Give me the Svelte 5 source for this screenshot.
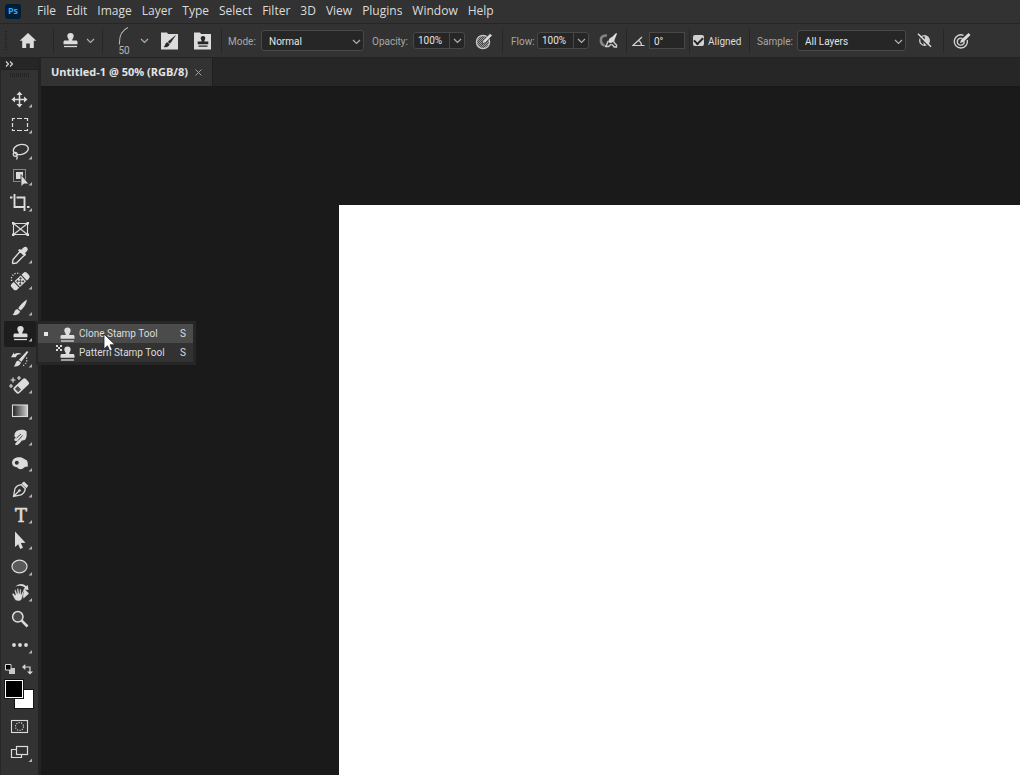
<script>
  const menus = ['File', 'Edit', 'Image', 'Layer', 'Type', 'Select', 'Filter', '3D', 'View', 'Plugins', 'Window', 'Help'];
  const tools = [
    ['move', 'Move Tool'], ['marquee', 'Rectangular Marquee Tool'], ['lasso', 'Lasso Tool'],
    ['object', 'Object Selection Tool'], ['crop', 'Crop Tool'], ['frame', 'Frame Tool'],
    ['dropper', 'Eyedropper Tool'], ['heal', 'Spot Healing Brush Tool'], ['brush', 'Brush Tool'],
    ['stamp', 'Clone Stamp Tool'], ['history', 'History Brush Tool'], ['eraser', 'Magic Eraser Tool'],
    ['gradient', 'Gradient Tool'], ['smudge', 'Smudge Tool'], ['sponge', 'Sponge Tool'],
    ['pen', 'Pen Tool'], ['type', 'Type Tool'], ['arrow', 'Path Selection Tool'],
    ['ellipse', 'Ellipse Tool'], ['rotate', 'Rotate View Tool'], ['zoom', 'Zoom Tool'], ['more', 'Edit Toolbar']
  ];
  const single = ['frame', 'zoom'];
  const flyout = [
    { name: 'Clone Stamp Tool', key: 'S' },
    { name: 'Pattern Stamp Tool', key: 'S' }
  ];
  let active = $state('stamp');
  let variant = $state(0);
  let aligned = $state(true);
</script>

{#snippet stamp()}
  <path d="M12.500 5c2 0 3.200 1.300 3.200 3 0 1.800-1.500 2.400-1.500 4.500h3.800c1 0 1.500.6 1.500 1.500v2.200h-14V14c0-.9.500-1.500 1.500-1.500h3.800c0-2.100-1.500-2.700-1.500-4.500 0-1.700 1.200-3 3.200-3z" fill="currentColor" />
  <path d="M6 18.500h13" stroke="currentColor" stroke-width="1.300" />
{/snippet}

{#snippet chevron()}
  <svg class="chev" viewBox="0 0 9 6" aria-hidden="true"><path d="M1 1l3.500 3.500L8 1" fill="none" stroke="currentColor" stroke-width="1.200" /></svg>
{/snippet}

{#snippet pressure(id)}
  <svg class="opt-icon" viewBox="0 0 18 18" aria-hidden="true">
    <defs><pattern {id} width="2" height="2" patternUnits="userSpaceOnUse"><rect width="2" height="2" fill="#4a4a4a" /><rect width="1" height="1" fill="#999" /><rect x="1" y="1" width="1" height="1" fill="#999" /></pattern></defs>
    <circle cx="8" cy="10" r="6.600" fill="url(#{id})" stroke="#c8c8c8" stroke-width="1.300" />
    <path d="M7 12l1-3.500L15 1.500l2.300 2-6.800 7z" fill="#dcdcdc" stroke="#323232" stroke-width=".7" />
  </svg>
{/snippet}

<div class="app">
  <header class="menubar">
    <span class="logo">Ps</span>
    <nav aria-label="Main menu">
      {#each menus as m}<button>{m}</button>{/each}
    </nav>
  </header>

  <section class="options" aria-label="Tool options">
    <div class="group g-home">
      <span class="grip-v"></span>
      <button class="ib" aria-label="Home">
        <svg width="18" height="17" viewBox="0 0 18 17"><path d="M9 1L.7 8.800h2.500V16h4v-4.600h3.600V16h4V8.800h2.500z" fill="currentColor" /></svg>
      </button>
    </div>
    <div class="group g-preset">
      <button class="ib" aria-label="Tool preset"><svg width="26" height="26" viewBox="0 0 26 26">{@render stamp()}</svg>{@render chevron()}</button>
    </div>
    <div class="group g-brush">
      <button class="ib preview" aria-label="Brush preset">
        <span class="tip"><svg width="12" height="19" viewBox="0 0 12 19"><path d="M1.500 17.500C1 9 4.500 3 10 .5" fill="none" stroke="#b4b4b4" stroke-width="1.100" /></svg><span>50</span></span>
        {@render chevron()}
      </button>
      <button class="ib" aria-label="Brush settings">
        <svg width="18" height="18" viewBox="0 0 18 18"><path d="M0 .5h6l1 1.500h10v15.500H0z" fill="currentColor" /><path d="M14.500 3.500L9 11.500l-2-1.700zM6.300 10.500l2 1.700c-.6 2.600-2.600 2.900-5.300 2.800 1.600-.9.900-3.900 3.300-4.500z" fill="#262626" stroke="#262626" stroke-width=".4" /></svg>
      </button>
      <button class="ib" aria-label="Clone source">
        <svg width="18" height="18" viewBox="0 0 18 18"><path d="M0 .5h6l1 1.500h10v15.500H0z" fill="currentColor" /><path d="M9 4c1.600 0 2.300 1 2.300 2.200 0 1.300-1 1.800-1 3.300h4v2.700H3.700V9.500h4c0-1.500-1-2-1-3.300C6.700 5 7.400 4 9 4zM4.500 13.500h9v1.200h-9z" fill="#262626" /></svg>
      </button>
    </div>
    <div class="group g-mode">
      <label for="mode">Mode:</label>
      <span class="sel"><select id="mode"><option>Normal</option><option>Multiply</option><option>Screen</option></select>{@render chevron()}</span>
      <label for="opacity">Opacity:</label>
      <span class="combo"><input id="opacity" value="100%" /><button aria-label="Opacity slider">{@render chevron()}</button></span>
      <button class="ib press" aria-label="Pressure for opacity">{@render pressure('check')}</button>
    </div>
    <div class="group g-flow">
      <label for="flow">Flow:</label>
      <span class="combo"><input id="flow" value="100%" /><button aria-label="Flow slider">{@render chevron()}</button></span>
      <button class="ib press" aria-label="Airbrush">
        <svg width="19" height="18" viewBox="0 0 19 18">
          <path d="M8 3.500C3.500 3 1.500 5.500 1.900 9c.3 2.500 1.800 4 3.600 4.500" fill="none" stroke="#858585" stroke-width="2.600" />
          <path d="M9.500 10.500c-.3-3 1.500-5 3.500-5.500L16.500 1.500l1.500-.5-.5 2-2.500 6c-2 2-3.500 2.500-5.500 1.500z" fill="#dcdcdc" />
          <path d="M9.500 9c-2 1.500-.5 4-3.500 5.500h3.500l3-2.500M14.500 7.500l.5 3 2.500 2.500v2h-2.200L13 12.500" fill="none" stroke="#d0d0d0" stroke-width="1.400" />
        </svg>
      </button>
    </div>
    <div class="group g-angle">
      <label for="angle" aria-label="Angle"><svg width="14" height="12" viewBox="0 0 14 12"><path d="M12.500 9.500H1L10 1M6.500 4.500c2 1 3 2.500 3 5" fill="none" stroke="#d0d0d0" stroke-width="1.200" /></svg></label>
      <input id="angle" class="field" value="0°" />
    </div>
    <div class="group g-align">
      <input id="aligned" type="checkbox" bind:checked={aligned} /><label for="aligned">Aligned</label>
    </div>
    <div class="group g-sample">
      <label for="sample">Sample:</label>
      <span class="sel"><select id="sample"><option>All Layers</option><option>Current Layer</option><option>Current &amp; Below</option></select>{@render chevron()}</span>
      <button class="ib" aria-label="Ignore adjustment layers">
        <svg width="15" height="15" viewBox="0 0 15 15"><circle cx="7.500" cy="7.500" r="4.800" fill="#323232" stroke="#d0d0d0" stroke-width="1.300" /><path d="M7.500 2.700a4.800 4.800 0 0 1 0 9.600c-2.800-2.500 1.500-5.500 0-9.600z" fill="#d0d0d0" /><path d="M0 1.700l13 13" stroke="#323232" stroke-width="1.500" /><path d="M1 .8l13 13" stroke="#dcdcdc" stroke-width="1.500" /></svg>
      </button>
    </div>
    <div class="group g-last">
      <button class="ib" aria-label="Pressure for size">
        <svg width="18" height="18" viewBox="0 0 18 18"><path d="M10.500 3.400A6.600 6.600 0 1 0 14.300 8M9.500 6.600A3.500 3.500 0 1 0 11.300 9.500" fill="none" stroke="#d0d0d0" stroke-width="1.400" /><path d="M7 11l1-3L15.500 1l2 2-7 7z" fill="#dcdcdc" /></svg>
      </button>
    </div>
  </section>

  <div class="body">
    <aside>
      <button class="collapse" aria-label="Expand panel"><svg width="9" height="6" viewBox="0 0 9 6"><path d="M1 .5L3.500 3 1 5.500M5 .5L7.500 3 5 5.500" fill="none" stroke="currentColor" stroke-width="1.100" /></svg></button>
      <div class="grip-row"><span class="grip-h"></span></div>
      <ul class="tools">
        {#each tools as [id, name]}
          <li>
            <button class="tool" class:active={active === id} aria-label={name} onclick={() => (active = id)}>
              <svg viewBox="0 0 26 26" aria-hidden="true">
                {#if id === 'move'}
                  <path d="M12.500 6.500v12M6.500 12.500h12" stroke="currentColor" stroke-width="1.500" />
                  <path d="M12.500 4.500l3 3.500h-6zM12.500 20.500l3-3.500h-6zM4.500 12.500L8 9.500v6zM20.500 12.500L17 9.500v6z" fill="currentColor" />
                {:else if id === 'marquee'}
                  <path d="M5.500 8V5.500H8M10 5.500h5M17 5.500h3.500V8M20.500 10v4M20.500 16v1.500h-3.500M15 17.500h-5M8 17.500H5.500V16M5.500 14v-4" fill="none" stroke="currentColor" stroke-width="1.200" />
                {:else if id === 'lasso'}
                  <ellipse cx="13.800" cy="10.500" rx="7.600" ry="5" transform="rotate(-12 13.800 10.500)" fill="none" stroke="currentColor" stroke-width="1.400" />
                  <circle cx="8.200" cy="15.300" r="2" fill="none" stroke="currentColor" stroke-width="1.200" /><path d="M9 16.500c1.500 1 1.500 2.500.5 4" fill="none" stroke="currentColor" stroke-width="1.300" />
                {:else if id === 'object'}
                  <rect x="6.500" y="4.500" width="12" height="12" fill="none" stroke="currentColor" stroke-dasharray="1 1" />
                  <path d="M9 7h7v7H9z" fill="currentColor" /><path d="M14 9.500v12l3-2.600h4.800z" fill="currentColor" stroke="#323232" stroke-width=".8" />
                {:else if id === 'crop'}
                  <path d="M3 6.500h2.500M7.500 3v13H18M9.500 6.500h8V20M20 16h2.500" fill="none" stroke="currentColor" stroke-width="1.900" />
                {:else if id === 'frame'}
                  <path d="M6.500 6.500h14v11h-14zM6.500 6.500l14 11M20.500 6.500l-14 11" fill="none" stroke="currentColor" stroke-width="1.100" />
                  <path d="M5 5h2.500v2.500H5zM19.500 5H22v2.500h-2.500zM5 16.500h2.500V19H5zM19.500 16.500H22V19h-2.500z" fill="currentColor" />
                {:else if id === 'dropper'}
                  <path d="M13.500 8l4 4-8 8-3.500.5-.5-.5.500-3.500z" fill="none" stroke="currentColor" stroke-width="1.400" />
                  <path d="M11 7.500l1.500-1.500 1.700.7 2.100-2c2.500-2.300 5.800.6 3.800 3.200l-2 2.100 1 1.700-1.500 1.600z" fill="currentColor" />
                {:else if id === 'heal'}
                  <path d="M4.500 12V8.500l2-3.300 3.500-1.200 3 1" fill="none" stroke="currentColor" stroke-width="1.300" stroke-dasharray="1.200 1.600" />
                  <g transform="translate(.3 -.8) rotate(-43 13 13)"><rect x="2.500" y="9" width="21" height="8" rx="2.600" fill="currentColor" /><path d="M8.300 8.500v9.500M17.700 8.500v9.500" stroke="#323232" stroke-width="1.100" /><path d="M10 10.200h2v2h-2zM14 10.200h2v2h-2zM10 14h2v2h-2zM14 14h2v2h-2zM12 12.100h2v2h-2z" fill="#4a4a4a" /></g>
                {:else if id === 'brush'}
                  <path d="M20 4.500c-4 2.500-7 6-8.800 8.800l2.600 2.300C17 12.500 19.500 8.500 20 4.500zM10.500 14l2.600 2.400c-1 3.200-4.300 4.100-7.800 3.600 2.500-1.300 1.500-5.400 5.200-6z" fill="currentColor" />
                {:else if id === 'stamp'}
                  <g transform="translate(1 0)">{@render stamp()}</g>
                {:else if id === 'history'}
                  <path d="M20 4l1.300 1L14.500 14.800l-2.700-2zM11.200 13.400l2.800 2.200c-1 3.400-4 4.400-7.500 3.900 2.200-1 1.500-5.500 4.700-6.100z" fill="currentColor" />
                  <path d="M4 10.300l3-5v2c3-1.800 5.500-1.600 7.500 0-3.200-.4-5 .4-5.500 3z" fill="currentColor" /><path d="M19.500 10.500c1 4-.5 7.500-4.500 8.500" fill="none" stroke="currentColor" stroke-width="1.200" stroke-dasharray="1.200 1.600" />
                {:else if id === 'eraser'}
                  <g transform="rotate(-43 14.500 13)"><rect x="6" y="8.800" width="16.500" height="8" rx="2.200" fill="currentColor" /><path d="M7.800 10.500h4v4.700h-4z" fill="#4a4a4a" /></g>
                  <path d="M6 4.500v5M3.500 7h5M12 3v4M10 5h4M4 11v4M2 13h4" stroke="currentColor" stroke-width="1.200" />
                {:else if id === 'gradient'}
                  <defs><linearGradient id="ramp"><stop stop-color="#222" /><stop offset="1" stop-color="#cfcfcf" /></linearGradient></defs>
                  <rect x="5.500" y="6" width="15" height="11.500" fill="url(#ramp)" stroke="currentColor" stroke-width="1.100" />
                {:else if id === 'smudge'}
                  <path d="M7.500 9.500C8 6.500 10.500 5 14 4.800c2.800-.1 5 .4 5.500 1.700.4 2 .4 6-1 7.800-1 1.200-2.500 1.200-3.700 1.200-1 1.800-2.600 3.600-4.800 4.600-1.800.6-2.400-.8-1.200-2.100l2-2.600c-2 1.200-3.600.6-3.500-.9.100-.8 1.200-1.200 1.700-2-1.500 0-1.700-1.500-1.500-3z" fill="currentColor" />
                  <path d="M9.500 13l4.500-4M11 15.500l4.500-5" stroke="#323232" stroke-width=".9" />
                {:else if id === 'sponge'}
                  <path d="M5 11.500C5.500 8 8.500 6.300 12 6.300c4 0 5.500 2 8 3.200 1 2 1 5 .5 6.500-2-.5-3 .2-4.500 1.500-2.500 1.500-4.500.5-6-1.200C7 16 5 14.500 5 11.500z" fill="currentColor" /><circle cx="9.800" cy="11.800" r="2" fill="#323232" />
                {:else if id === 'pen'}
                  <path d="M6.500 19.500l1.500-8q2-3.300 6.300-3.800l4 4q-.5 4.300-4.300 6.300zM6.500 19.500l5.500-5.500" fill="none" stroke="currentColor" stroke-width="1.300" /><circle cx="12.500" cy="13.500" r="1.300" fill="currentColor" /><path d="M14.500 6.500L17 4.500l4.300 4.300-2 2.500z" fill="currentColor" />
                {:else if id === 'type'}
                  <text x="14" y="18.500" text-anchor="middle" class="glyph">T</text>
                {:else if id === 'arrow'}
                  <path d="M8 2.500v15.500l3.200-2.800 2 4.700 2.800-1.200-2.200-4.700 4.700-.3z" fill="currentColor" />
                {:else if id === 'ellipse'}
                  <ellipse cx="12.500" cy="11.500" rx="7.500" ry="6.400" fill="#5a5a5a" stroke="currentColor" stroke-width="1.200" />
                {:else if id === 'rotate'}
                  <path d="M8.500 5.500c3-3.500 8-3.300 10.500-.2l1.700-1.300.8 5-5-.7 1.500-1.500C15.500 4.700 12 4.300 8.500 5.500zM17 7.500l5 5-5.500 5-1-5.500z" fill="currentColor" />
                  <path d="M6 12l2.500 2.300L7.500 9l1.300-.3 1.500 4L10 7.500h1.400l.9 5 .6-4.500 1.300.2-.2 5.300 1.500-3 1.200.5-1.500 6c-.6 2-1.700 3-3.700 3-2.500 0-3.500-1-4.500-3L5 13z" fill="currentColor" stroke="#323232" stroke-width=".4" />
                {:else if id === 'zoom'}
                  <circle cx="10.800" cy="9.800" r="5.200" fill="#484848" stroke="currentColor" stroke-width="1.500" /><path d="M14.700 13.700l5.800 5.800" stroke="currentColor" stroke-width="2.600" />
                {:else}
                  <circle cx="7" cy="12" r="1.900" fill="currentColor" /><circle cx="13" cy="12" r="1.900" fill="currentColor" /><circle cx="19" cy="12" r="1.900" fill="currentColor" />
                {/if}
                {#if !single.includes(id)}<path d="M25 17v3.500h-3.500z" fill="#b4b4b4" />{/if}
              </svg>
            </button>
            {#if id === 'stamp'}
              <div class="flyout" role="menu">
                {#each flyout as item, i}
                  <button role="menuitem" class:current={variant === i} onclick={() => (variant = i)}>
                    <span class="dot"></span>
                    <svg width="28" height="19" viewBox="0 2 28 19" aria-hidden="true">
                      <g transform="translate(4 .5)">{@render stamp()}</g>
                      {#if i === 1}<path d="M5 4h2v2H5zM9 4h2v2H9zM7 6h2v2H7zM5 8h2v2H5zM9 8h2v2H9z" fill="currentColor" />{/if}
                    </svg>
                    <span class="name">{item.name}</span><kbd>{item.key}</kbd>
                  </button>
                {/each}
                <svg class="pointer" width="13" height="19" viewBox="0 0 13 19" aria-hidden="true"><path d="M1 1v15l3.500-3.200L6.800 18l2.500-1.100L7 11.800h5z" fill="#fff" stroke="#222" stroke-width=".8" /></svg>
              </div>
            {/if}
          </li>
        {/each}
      </ul>
      <div class="mini">
        <button aria-label="Default colors"><svg width="11" height="11" viewBox="0 0 11 11"><path d="M4 4h6v6H4z" fill="#c8c8c8" /><path d="M.5.5h5.500v5.500H.5z" fill="#000" stroke="#d8d8d8" /></svg></button>
        <button aria-label="Swap colors"><svg width="11" height="11" viewBox="0 0 11 11"><path d="M2 3h6v6" fill="none" stroke="#d8d8d8" stroke-width="1.200" /><path d="M0 3L3.300 0v6zM8 10.500L5 7.500h6z" fill="#d8d8d8" /></svg></button>
      </div>
      <div class="swatches">
        <button class="sw back" aria-label="Background color"></button>
        <button class="sw front" aria-label="Foreground color"></button>
      </div>
      <div class="modes">
        <button class="tool" aria-label="Quick mask"><svg viewBox="0 0 26 26"><rect x="4.500" y="6.500" width="16" height="12" fill="none" stroke="currentColor" stroke-width="1.100" /><circle cx="12.500" cy="12.500" r="4" fill="none" stroke="currentColor" stroke-width="1.200" stroke-dasharray="1.100 1.400" /></svg></button>
        <button class="tool" aria-label="Screen mode"><svg viewBox="0 0 26 26"><path d="M9 9.500H4.500v8h10V15" fill="none" stroke="currentColor" stroke-width="1.200" /><rect x="9.500" y="6.500" width="11" height="8" fill="none" stroke="currentColor" stroke-width="1.200" /><path d="M25 18.500V22h-3.500z" fill="#b4b4b4" /></svg></button>
      </div>
    </aside>

    <main>
      <div class="tabs">
        <div class="tab">
          <span>Untitled-1 @ 50% (RGB/8)</span>
          <button aria-label="Close document"><svg width="7" height="7" viewBox="0 0 7 7"><path d="M.5.5l6 6M6.500.5l-6 6" stroke="#a0a0a0" /></svg></button>
        </div>
      </div>
      <div class="workspace"><div class="paper"></div></div>
    </main>
  </div>
</div>

<style>
  :global(body) { margin: 0; background: #1a1a1a; }
  .app, .app * { box-sizing: border-box; }
  .app {
    display: flex; flex-direction: column; min-height: 100vh; overflow: hidden;
    font-family: Roboto, sans-serif; font-size: 10px; line-height: 14px; color: #dcdcdc; background: #323232;
  }
  button { border: 0; padding: 0; margin: 0; background: none; color: inherit; font: inherit; }
  svg { display: block; flex: none; }

  .menubar { display: flex; align-items: center; height: 24px; padding: 0 5px 1px; border-bottom: 1px solid #262626; }
  .logo { width: 16px; height: 15px; border-radius: 3px; background: #001e36; color: #31a8ff; font: bold 9px/14px "Open Sans", sans-serif; text-align: center; }
  nav { display: flex; gap: 10px; margin-left: 16px; font: 12px/18px "Open Sans", sans-serif; }

  .options { display: flex; height: 34px; align-items: center; border-bottom: 1px solid #232323; }
  .group { display: flex; flex: none; align-items: center; height: 24px; border-right: 1px solid #262626; }
  .group:last-child { border: 0; }
  .ib { display: flex; align-items: center; }
  .chev { width: 9px; height: 6px; color: #b0b0b0; }
  .opt-icon { width: 18px; height: 18px; }
  label { color: #a8a8a8; flex: none; padding-top: 2px; }
  .g-home { width: 54px; padding-left: 5px; gap: 12px; }
  .grip-v { width: 2px; height: 20px; background: repeating-linear-gradient(#222 0 1px, transparent 1px 2px); }
  .g-preset { width: 49px; padding-left: 4px; }
  .g-preset .ib { gap: 2px; }
  .g-brush { width: 119px; padding-left: 14px; }
  .preview { width: 44px; gap: 9px; }
  .preview + .ib { width: 33px; }
  .tip { display: flex; flex-direction: column; align-items: center; width: 14px; line-height: 10px; padding-top: 1px; color: #b4b4b4; }
  .g-mode { width: 281px; padding-left: 6px; }
  .g-mode label { width: 41px; }
  .g-mode label:first-child { width: 33px; }
  .sel { position: relative; height: 21px; }
  .sel select {
    appearance: none; width: 103px; height: 21px; padding: 2px 7px 0; border: 1px solid #484848; border-radius: 3px;
    background: #262626; color: #e4e4e4; font: inherit;
  }
  .sel .chev { position: absolute; right: 11px; top: 9px; }
  .g-mode .sel { width: 111px; }
  .combo { display: flex; width: 52px; height: 17px; border: 1px solid #484848; border-radius: 3px; background: #262626; }
  .combo input { width: 36px; min-width: 0; padding: 1px 4px 0; border: 0; border-right: 1px solid #484848; background: none; color: #e4e4e4; font: inherit; }
  .combo button { flex: 1; display: grid; place-items: center; }
  .press { margin-left: 10px; }
  .g-flow { width: 124px; padding-left: 8px; }
  .g-flow label { width: 26px; }
  .g-angle { width: 63px; padding-left: 5px; gap: 3px; }
  .field { width: 36px; height: 17px; padding: 1px 4px 0; border: 1px solid #484848; background: #262626; color: #e4e4e4; font: inherit; }
  .g-align { width: 60px; padding-left: 3px; gap: 4px; }
  .g-align label { color: #dcdcdc; }
  input[type='checkbox'] { appearance: none; width: 11px; height: 11px; margin: 0; border-radius: 2px; background: #d0d0d0; display: grid; place-items: center; }
  input[type='checkbox']:checked::before { content: ''; width: 7px; height: 4px; border: solid #222; border-width: 0 0 2px 2px; transform: translateY(-1px) rotate(-45deg); }
  .g-sample { width: 194px; padding-left: 7px; }
  .g-sample label { width: 40px; }
  .g-sample .sel { width: 120px; }
  .g-sample select { width: 109px; }
  .g-sample .chev { right: 14px; }
  .g-last { padding-left: 9px; }

  .body { flex: 1; display: flex; }
  aside { width: 41px; flex: none; background: #323232; border-left: 1px solid #262626; border-right: 3px solid #232323; }
  .collapse { display: flex; align-items: center; width: 100%; height: 12px; padding-left: 4px; background: #262626; border-bottom: 1px solid #202020; }
  .grip-row { height: 17px; padding: 3px 9px 0; }
  .grip-h { display: block; height: 4px; width: 20px; background: repeating-linear-gradient(90deg, #242424 0 1px, transparent 1px 2px); }
  .tools { list-style: none; margin: 0; padding: 0 0 0 3px; }
  .tools li { position: relative; height: 26px; }
  .tool { display: block; width: 32px; height: 26px; padding-left: 3px; border-radius: 2px; }
  .tool svg { width: 26px; height: 26px; }
  .tool.active { background: #1d1d1d; }
  .glyph { font: 18px "DejaVu Serif", serif; fill: currentColor; stroke: currentColor; stroke-width: .6px; }
  .mini { display: flex; align-items: flex-start; gap: 6px; padding: 5px 4px 0; height: 20px; }
  .mini button { height: 11px; }
  .swatches { display: grid; grid-template-columns: 10px 10px 10px; grid-template-rows: 10px 10px 10px; padding-left: 3px; }
  .sw { border: 1px solid #151515; background: #fff; }
  .back { grid-area: 2 / 2 / 4 / 4; }
  .front { grid-area: 1 / 1 / 3 / 3; background: #000; box-shadow: inset 0 0 0 1px #fff; }
  .modes { padding: 5px 0 7px 3px; }

  .flyout { position: absolute; z-index: 2; left: 32px; top: 0; width: 160px; padding: 3px 3px 3px 2px; background: #262626; font-size: 10px; }
  .flyout button { display: flex; align-items: center; width: 100%; height: 19px; padding: 0 7px 0 6px; background: #323232; text-align: left; }
  .flyout .current { background: #4b4b4b; }
  .dot { width: 4px; height: 4px; margin-right: 3px; }
  .current .dot { background: #e8e8e8; }
  .name { flex: 1; white-space: nowrap; }
  kbd { font: inherit; }
  .pointer { position: absolute; left: 67px; top: 12px; }

  main { flex: 1; min-width: 0; display: flex; flex-direction: column; background: #1a1a1a; }
  .tabs { height: 29px; background: #262626; border-bottom: 1px solid #181818; display: flex; }
  .tab { display: flex; align-items: center; gap: 7px; padding: 0 10px; background: #323232; border-right: 1px solid #1f1f1f; font: bold 11px/16px "Open Sans", sans-serif; color: #e4e4e4; }
  .workspace { flex: 1; display: flex; padding: 118px 0 0 298px; }
  .paper { flex: 1; background: #fff; }
</style>
